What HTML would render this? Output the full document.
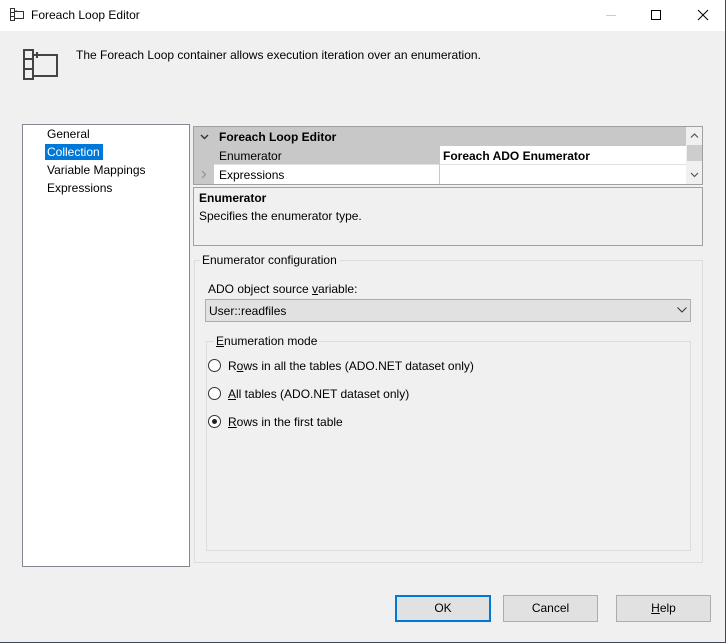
<!DOCTYPE html>
<html><head><style>
*{margin:0;padding:0;box-sizing:border-box}
body{width:726px;height:643px;background:#f0f0f0;font-family:"Liberation Sans",sans-serif;font-size:12px;color:#000;position:relative;overflow:hidden}
.a{position:absolute;white-space:nowrap}
.btn{position:absolute;height:27px;background:#e1e1e1;border:1px solid #adadad;text-align:center;line-height:25px}
.radio{position:absolute;width:13px;height:13px;border:1px solid #333;border-radius:50%;background:#fff}
u{text-decoration:underline}
</style></head><body>
<div class="a" style="left:0;top:0;width:726px;height:31px;background:#fff"></div>
<div class="a" style="left:725px;top:0;width:1px;height:643px;background:#3a4a5a"></div>
<div class="a" style="left:0;top:642px;width:726px;height:1px;background:#3a4a5a"></div>
<svg class="a" style="left:9px;top:8px" width="16" height="14" viewBox="0 0 16 14" fill="none" stroke="#333" stroke-width="1"><rect x="1.5" y="0.5" width="4" height="4"/><rect x="1.5" y="4.5" width="4" height="4"/><rect x="1.5" y="8.5" width="4" height="4"/><path d="M5.5 3.5H14.5V10.5H5.5M6.5 3.5l1-1"/></svg>
<div class="a" style="left:31px;top:8px;font-size:12px">Foreach Loop Editor</div>
<div class="a" style="left:606px;top:15px;width:10px;height:1px;background:#ccc"></div>
<div class="a" style="left:651px;top:10px;width:10px;height:10px;border:1px solid #000"></div>
<svg class="a" style="left:697px;top:9px" width="12" height="12"><path d="M1 1L11 11M11 1L1 11" stroke="#000" stroke-width="1"/></svg>
<svg class="a" style="left:22px;top:48px" width="38" height="36" viewBox="0 0 38 36" fill="none" stroke="#444" stroke-width="2"><rect x="2" y="2" width="9" height="9"/><rect x="2" y="11" width="9" height="10"/><rect x="2" y="21" width="9" height="10"/><path d="M11 7H35V28H11M15 4v6"/></svg>
<div class="a" style="left:76px;top:48px">The Foreach Loop container allows execution iteration over an enumeration.</div>

<div class="a" style="left:22px;top:124px;width:168px;height:443px;background:#fff;border:1px solid #828790"></div>
<div class="a" style="left:47px;top:127px">General</div>
<div class="a" style="left:45px;top:144px;width:58px;height:16px;background:#0078d7"></div>
<div class="a" style="left:47px;top:145px;color:#fff">Collection</div>
<div class="a" style="left:47px;top:163px">Variable Mappings</div>
<div class="a" style="left:47px;top:181px">Expressions</div>

<div class="a" style="left:193px;top:126px;width:510px;height:59px;border:1px solid #a0a0a0;background:#fff"></div>
<div class="a" style="left:194px;top:127px;width:492px;height:19px;background:#c8c8c8"></div>
<div class="a" style="left:194px;top:146px;width:20px;height:38px;background:#c8c8c8"></div>
<div class="a" style="left:214px;top:146px;width:225px;height:19px;background:#c8c8c8"></div>
<div class="a" style="left:439px;top:146px;width:1px;height:38px;background:#c8c8c8"></div>
<div class="a" style="left:440px;top:164px;width:246px;height:1px;background:#e0e0e0"></div>
<div class="a" style="left:214px;top:164px;width:225px;height:1px;background:#e0e0e0"></div>
<div class="a" style="left:686px;top:127px;width:16px;height:57px;background:#f0f0f0"></div>
<div class="a" style="left:687px;top:145px;width:15px;height:16px;background:#cdcdcd"></div>
<svg class="a" style="left:690px;top:133px" width="9" height="6"><path d="M1 4.5L4.5 1L8 4.5" stroke="#555" fill="none" stroke-width="1.2"/></svg>
<svg class="a" style="left:690px;top:172px" width="9" height="6"><path d="M1 1L4.5 4.5L8 1" stroke="#555" fill="none" stroke-width="1.2"/></svg>
<svg class="a" style="left:200px;top:134px" width="9" height="6"><path d="M1 1L4.5 4.5L8 1" stroke="#333" fill="none" stroke-width="1.4"/></svg>
<svg class="a" style="left:201px;top:170px" width="6" height="9"><path d="M1 1L4.5 4.5L1 8" stroke="#999" fill="none" stroke-width="1.4"/></svg>
<div class="a" style="left:219px;top:130px;font-weight:bold">Foreach Loop Editor</div>
<div class="a" style="left:219px;top:149px">Enumerator</div>
<div class="a" style="left:443px;top:149px;font-weight:bold">Foreach ADO Enumerator</div>
<div class="a" style="left:219px;top:168px">Expressions</div>

<div class="a" style="left:193px;top:187px;width:510px;height:59px;border:1px solid #a0a0a0;background:#f0f0f0"></div>
<div class="a" style="left:199px;top:191px;font-weight:bold">Enumerator</div>
<div class="a" style="left:199px;top:209px">Specifies the enumerator type.</div>

<div class="a" style="left:194px;top:260px;width:509px;height:303px;border:1px solid #dcdcdc"></div>
<div class="a" style="left:200px;top:253px;padding:0 2px;background:#f0f0f0">Enumerator configuration</div>
<div class="a" style="left:208px;top:282px">ADO object source <u>v</u>ariable:</div>
<div class="a" style="left:205px;top:299px;width:486px;height:23px;background:#e1e1e1;border:1px solid #adadad"></div>
<div class="a" style="left:209px;top:304px">User::readfiles</div>
<svg class="a" style="left:677px;top:307px" width="10" height="6"><path d="M0.5 0.5L5 5L9.5 0.5" stroke="#333" fill="none"/></svg>
<div class="a" style="left:206px;top:341px;width:485px;height:210px;border:1px solid #dcdcdc"></div>
<div class="a" style="left:214px;top:334px;padding:0 2px;background:#f0f0f0"><u>E</u>numeration mode</div>
<div class="radio" style="left:208px;top:359px"></div>
<div class="a" style="left:228px;top:359px">R<u>o</u>ws in all the tables (ADO.NET dataset only)</div>
<div class="radio" style="left:208px;top:387px"></div>
<div class="a" style="left:228px;top:387px"><u>A</u>ll tables (ADO.NET dataset only)</div>
<div class="radio" style="left:208px;top:415px"><div style="position:absolute;left:3px;top:3px;width:5px;height:5px;border-radius:50%;background:#222"></div></div>
<div class="a" style="left:228px;top:415px"><u>R</u>ows in the first table</div>

<div class="btn" style="left:395px;top:595px;width:96px;border:2px solid #0078d7;line-height:23px">OK</div>
<div class="btn" style="left:503px;top:595px;width:95px">Cancel</div>
<div class="btn" style="left:616px;top:595px;width:95px"><u>H</u>elp</div>
</body></html>
